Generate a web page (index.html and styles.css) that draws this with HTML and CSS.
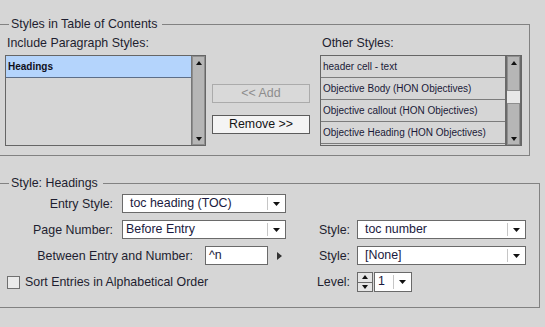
FILE: index.html
```html
<html>

<head>
    <title>Table of Contents</title>
    <link rel="stylesheet" href="styles.css">
</head>

<body>
    <fieldset class="group group-toc">
        <legend>Styles in Table of Contents</legend>
        <div class="toc-body">
            <div class="col col-left">
                <div class="field-label">Include Paragraph Styles:</div>
                <div class="listbox listbox-left">
                    <div class="list-items">
                        <div class="list-row selected">Headings</div>
                    </div>
                    <div class="scrollbar">
                        <div class="sb-seg sb-full">
                            <span class="tri-up"></span>
                            <span class="tri-down"></span>
                        </div>
                    </div>
                </div>
            </div>

            <div class="col col-buttons">
                <button class="btn" disabled>&lt;&lt; Add</button>
                <button class="btn">Remove &gt;&gt;</button>
            </div>

            <div class="col col-right">
                <div class="field-label">Other Styles:</div>
                <div class="listbox listbox-right">
                    <div class="list-items">
                        <div class="list-row">header cell - text</div>
                        <div class="list-row">Objective Body (HON Objectives)</div>
                        <div class="list-row">Objective callout (HON Objectives)</div>
                        <div class="list-row">Objective Heading (HON Objectives)</div>
                    </div>
                    <div class="scrollbar scrollbar-framed">
                        <div class="sb-seg sb-top"><span class="tri-up"></span></div>
                        <div class="sb-gap"></div>
                        <div class="sb-seg sb-bottom"><span class="tri-down"></span></div>
                    </div>
                </div>
            </div>
        </div>
    </fieldset>

    <fieldset class="group group-style">
        <legend>Style: Headings</legend>
        <div class="style-body">
            <!-- row 1 -->
            <div class="frow">
                <span class="lbl lbl-short">Entry Style:</span>
                <div class="select select-left">
                    <span class="select-text pad-wide">toc heading (TOC)</span>
                    <span class="select-arrow"><svg width="7" height="4"><polygon points="0,0 7,0 3.5,4" /></svg></span>
                </div>
            </div>
            <div class="frow"></div>

            <!-- row 2 -->
            <div class="frow">
                <span class="lbl lbl-short">Page Number:</span>
                <div class="select select-left">
                    <span class="select-text">Before Entry</span>
                    <span class="select-arrow"><svg width="7" height="4"><polygon points="0,0 7,0 3.5,4" /></svg></span>
                </div>
            </div>
            <div class="frow">
                <span class="lbl lbl-right">Style:</span>
                <div class="select select-right">
                    <span class="select-text pad-wide">toc number</span>
                    <span class="select-arrow"><svg width="7" height="4"><polygon points="0,0 7,0 3.5,4" /></svg></span>
                </div>
            </div>

            <!-- row 3 -->
            <div class="frow">
                <span class="lbl lbl-long">Between Entry and Number:</span>
                <div class="textbox">^n</div>
                <svg class="flyout" width="5" height="8"><polygon points="0,0 5,4 0,8" /></svg>
            </div>
            <div class="frow">
                <span class="lbl lbl-right">Style:</span>
                <div class="select select-right">
                    <span class="select-text pad-wide">[None]</span>
                    <span class="select-arrow"><svg width="7" height="4"><polygon points="0,0 7,0 3.5,4" /></svg></span>
                </div>
            </div>

            <!-- row 4 -->
            <div class="frow frow-tall">
                <span class="check"></span>
                <span class="check-label">Sort Entries in Alphabetical Order</span>
            </div>
            <div class="frow frow-tall">
                <span class="lbl lbl-right">Level:</span>
                <div class="spinner">
                    <span class="spin-half"><span class="tri-up"></span></span>
                    <span class="spin-half"><span class="tri-down"></span></span>
                </div>
                <div class="select select-level">
                    <span class="select-text">1</span>
                    <span class="select-arrow"><svg width="7" height="4"><polygon points="0,0 7,0 3.5,4" /></svg></span>
                </div>
            </div>
        </div>
    </fieldset>
</body>

</html>
```

FILE: styles.css
```css
html,
body {
    margin: 0;
    height: 100%;
}

body {
    background-color: #d6d6d6;
    font-family: "Liberation Sans", Arial, sans-serif;
    font-size: 12.4px;
    color: #1e1e30;
    width: 545px;
    overflow: hidden;
}

.group {
    margin: 0 0 0 -1px;
    border: 1px solid #828282;
    box-sizing: border-box;
    min-width: 0;
}

.group legend {
    padding: 0 5px 0 2px;
    line-height: 14px;
}

.group-toc {
    margin-top: 17px;
    width: 531px;
    padding: 5px 0 9px 5px;
}

.group-toc legend {
    margin-left: 4px;
}

.group-style {
    margin-top: 20px;
    width: 541px;
    padding: 4px 0 15px 0;
}

.group-style legend {
    margin-left: 9px;
}

/* top section */

.toc-body {
    display: flex;
}

.field-label {
    line-height: 14px;
    margin: 0 0 5px 2px;
}

.col-left {
    width: 201px;
}

.col-right {
    width: 202px;
}

.col-buttons {
    width: 98px;
    margin: 0 10px 0 6px;
    padding-top: 48px;
}

.btn {
    display: block;
    width: 98px;
    height: 19px;
    padding: 0;
    box-sizing: border-box;
    font-family: "Liberation Sans", Arial, sans-serif;
    font-size: 12.4px;
    line-height: 17px;
    background-color: #f4f4f4;
    border: 1px solid #5c5c5c;
    color: #151515;
}

.btn:disabled {
    background-color: #d9d9d9;
    border-color: #ababab;
    color: #8d8d8d;
}

.btn + .btn {
    margin-top: 12px;
}

.listbox {
    display: flex;
    height: 91px;
    box-sizing: border-box;
    border: 1px solid #666666;
}

.list-items {
    flex-grow: 1;
    overflow: hidden;
}

.list-row {
    height: 21px;
    line-height: 21px;
    border-bottom: 1px solid #7c7c7c;
    padding-left: 2px;
    font-size: 10px;
    color: #1a1a38;
    white-space: nowrap;
    overflow: hidden;
}

.list-row.selected {
    background-color: #b4d4fc;
    border-bottom-color: #5d6e88;
    font-weight: bold;
    color: #0f1020;
}

.scrollbar {
    width: 13px;
    display: flex;
    flex-direction: column;
    border-left: 1px solid #777777;
}

.scrollbar-framed {
    border: 1px solid #6a6a6a;
    border-width: 0 1px 0 2px;
}

.sb-seg {
    background-color: #b6b6b6;
    border: 1px solid #8e8e8e;
    display: flex;
    flex-direction: column;
    align-items: center;
}

.sb-full {
    flex-grow: 1;
    justify-content: space-between;
    padding: 4px 0 3px;
}

.sb-top {
    height: 35px;
    padding-top: 4px;
    box-sizing: border-box;
}

.sb-gap {
    height: 12px;
    background-color: #e8e8e8;
}

.sb-bottom {
    flex-grow: 1;
    justify-content: flex-end;
    padding-bottom: 3px;
}

.tri-up {
    width: 0;
    height: 0;
    border-left: 3px solid transparent;
    border-right: 3px solid transparent;
    border-bottom: 4px solid #111111;
}

.tri-down {
    width: 0;
    height: 0;
    border-left: 3px solid transparent;
    border-right: 3px solid transparent;
    border-top: 4px solid #111111;
}

/* bottom section */

.style-body {
    display: grid;
    grid-template-columns: 300px 1fr;
    row-gap: 7px;
}

.frow {
    display: flex;
    align-items: center;
    height: 19px;
}

.frow-tall {
    height: 20px;
}

.lbl {
    text-align: right;
    white-space: nowrap;
}

.lbl-short {
    width: 113px;
    margin-right: 9px;
}

.lbl-long {
    width: 193px;
    margin-right: 12px;
}

.lbl-right {
    width: 50px;
    margin-right: 7px;
}

.select {
    display: flex;
    height: 19px;
    box-sizing: border-box;
    border: 1px solid #6a6a6a;
    background-color: #ffffff;
}

.select-left {
    width: 164px;
}

.select-right {
    width: 169px;
}

.select-level {
    width: 38px;
    height: 20px;
}

.select-text {
    flex-grow: 1;
    padding-left: 3px;
    line-height: 17px;
    white-space: nowrap;
    overflow: hidden;
    color: #1a1a40;
}

.select-text.pad-wide {
    padding-left: 7px;
}

.select-arrow {
    width: 17px;
    display: flex;
    align-items: center;
    justify-content: center;
    border-left: 1px solid #c6c6c6;
    margin: 2px 0;
}

.select-arrow svg {
    fill: #111111;
}

.textbox {
    width: 63px;
    height: 19px;
    box-sizing: border-box;
    border: 1px solid #6a6a6a;
    background-color: #ffffff;
    padding-left: 3px;
    line-height: 17px;
    color: #1a1a40;
}

.flyout {
    margin-left: 9px;
    fill: #333333;
}

.check {
    width: 13px;
    height: 13px;
    box-sizing: border-box;
    border: 1px solid #707070;
    background-color: #ebebeb;
    margin: 0 5px 0 7px;
}

.spinner {
    width: 16px;
    height: 20px;
    box-sizing: border-box;
    border: 1px solid #6a6a6a;
    background-color: #e6e6e6;
    display: flex;
    flex-direction: column;
    margin-right: 1px;
}

.spin-half {
    flex-grow: 1;
    display: flex;
    align-items: center;
    justify-content: center;
}

.spin-half + .spin-half {
    border-top: 1px solid #6a6a6a;
}
```
